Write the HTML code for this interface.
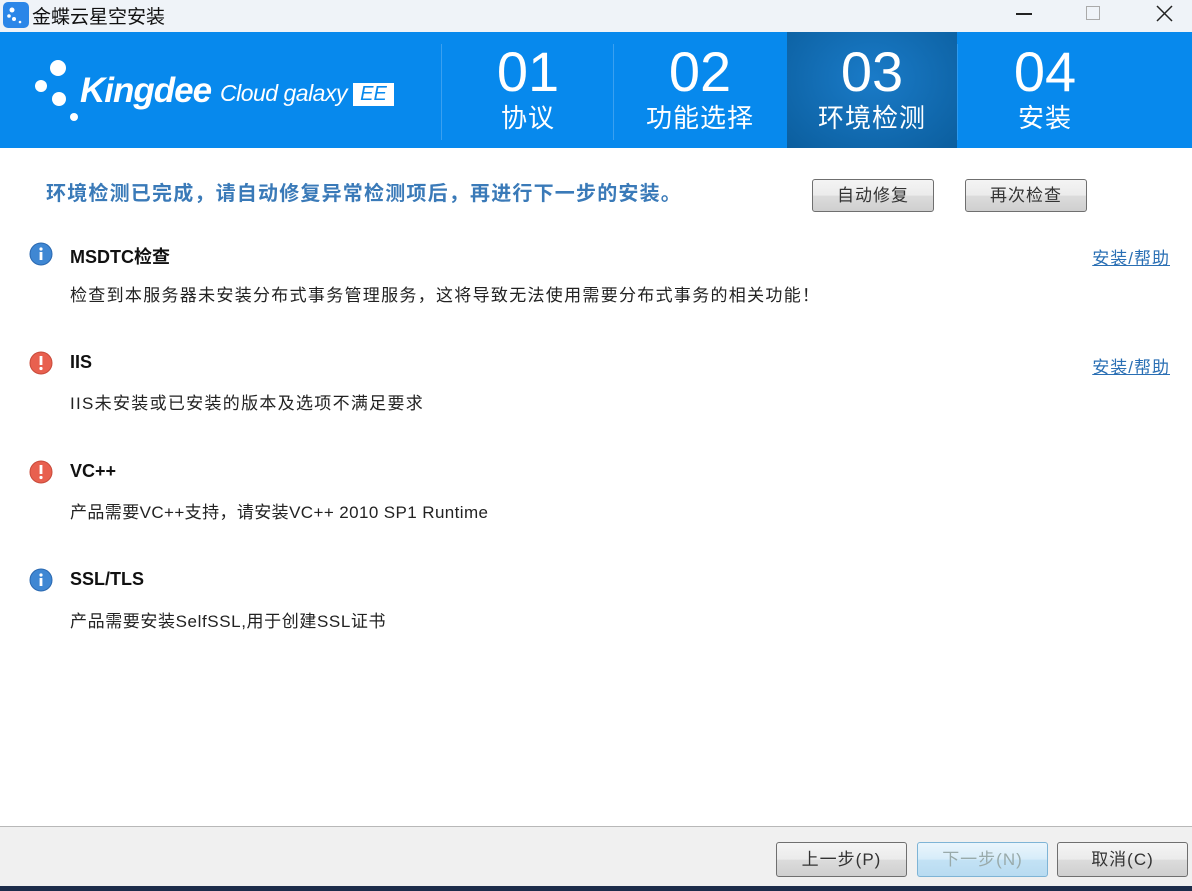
<!DOCTYPE html>
<html><head><meta charset="utf-8"><style>
*{margin:0;padding:0;box-sizing:border-box}
body{width:1192px;height:891px;background:#fff;font-family:"Liberation Sans","Noto Sans CJK SC",sans-serif;position:relative;overflow:hidden}
.tb{position:absolute;left:0;top:0;width:1192px;height:32px;background:#eff3f8}
.tb .t{position:absolute;left:32px;top:2px;font-size:19px;color:#111}
.hd{position:absolute;left:0;top:32px;width:1192px;height:116px;background:#0789ed}
.step{position:absolute;top:0;width:172px;height:116px;color:#fff;text-align:center}
.step .n{position:absolute;left:0;right:0;top:10px;font-size:56px;line-height:60px}
.step .l{position:absolute;left:0;right:0;top:66px;font-size:26px;letter-spacing:1px}
.sep{position:absolute;top:12px;width:1px;height:96px;background:#3aa0f0}
.btn{position:absolute;border:1px solid #6f6f6f;border-radius:3px;background:linear-gradient(#f4f4f4 0%,#ebebeb 50%,#dcdcdc 51%,#cfcfcf 100%);text-align:center;color:#333;font-size:17px;letter-spacing:1px}
.it{position:absolute;left:70px;font-size:18px;font-weight:bold;color:#111}
.ds{position:absolute;left:70px;font-size:17px;color:#222;letter-spacing:1.3px}
.lk{position:absolute;right:22px;font-size:17px;color:#2a6fb4;text-decoration:underline;letter-spacing:1px}
.ic{position:absolute;left:29px;width:24px;height:24px}
</style></head><body>
<div class="tb">
<svg style="position:absolute;left:3px;top:2px" width="26" height="26"><rect x="0" y="0" width="26" height="26" rx="5" fill="#2b86e8"/><circle cx="9" cy="8" r="2.5" fill="#fff"/><circle cx="6" cy="14" r="1.8" fill="#fff"/><circle cx="11" cy="17" r="2" fill="#fff"/><circle cx="17" cy="20" r="1.3" fill="#fff"/></svg>
<div class="t">金蝶云星空安装</div>
<div style="position:absolute;left:1016px;top:13px;width:16px;height:1.5px;background:#222"></div>
<div style="position:absolute;left:1086px;top:6px;width:14px;height:14px;border:1px solid #aaa"></div>
<svg style="position:absolute;left:1156px;top:5px" width="17" height="17"><path d="M1 1L16 16M16 1L1 16" stroke="#222" stroke-width="1.5"/></svg>
</div>
<div class="hd">
<svg style="position:absolute;left:34px;top:26px" width="50" height="70"><circle cx="24" cy="10" r="8" fill="#fff"/><circle cx="7" cy="28" r="6" fill="#fff"/><circle cx="25" cy="41" r="7" fill="#fff"/><circle cx="40" cy="59" r="4" fill="#fff"/></svg>
<div style="position:absolute;left:80px;top:39px;color:#fff;font-size:35px;font-weight:bold;font-style:italic;letter-spacing:-1px">Kingdee</div>
<div style="position:absolute;left:220px;top:48px;color:#fff;font-size:23px;font-style:italic;letter-spacing:-0.5px">Cloud galaxy</div>
<div style="position:absolute;left:353px;top:51px;width:41px;height:23px;background:#fff;color:#0789ed;font-size:20px;font-style:italic;text-align:center;line-height:23px">EE</div>
<div class="sep" style="left:441px"></div>
<div class="step" style="left:442px"><div class="n">01</div><div class="l">协议</div></div>
<div class="sep" style="left:613px"></div>
<div class="step" style="left:614px"><div class="n">02</div><div class="l">功能选择</div></div>
<div class="step" style="left:787px;width:170px;background:radial-gradient(ellipse at 50% 40%,#1a7bc8,#0b5e9e)"><div class="n">03</div><div class="l">环境检测</div></div>
<div class="sep" style="left:957px;background:#2c9af0"></div>
<div class="step" style="left:959px"><div class="n">04</div><div class="l">安装</div></div>
</div>
<div style="position:absolute;left:46px;top:177px;font-size:20px;font-weight:bold;color:#3a7ab8;letter-spacing:1.2px">环境检测已完成，请自动修复异常检测项后，再进行下一步的安装。</div>
<div class="btn" style="left:812px;top:179px;width:122px;height:33px;line-height:31px">自动修复</div>
<div class="btn" style="left:965px;top:179px;width:122px;height:33px;line-height:31px">再次检查</div>

<svg class="ic" style="top:242px" viewBox="0 0 24 24"><circle cx="12" cy="12" r="11" fill="#3f87d3" stroke="#2a68b0"/><circle cx="12" cy="7" r="1.6" fill="#fff"/><rect x="10.6" y="10" width="2.8" height="8" fill="#fff"/></svg>
<div class="it" style="top:243px">MSDTC检查</div>
<div class="lk" style="top:244px">安装/帮助</div>
<div class="ds" style="top:281px">检查到本服务器未安装分布式事务管理服务，这将导致无法使用需要分布式事务的相关功能！</div>

<svg class="ic" style="top:351px" viewBox="0 0 24 24"><circle cx="12" cy="12" r="11" fill="#e8604f" stroke="#c84a3a"/><rect x="10.6" y="5" width="2.8" height="9" fill="#fff"/><circle cx="12" cy="17.5" r="1.6" fill="#fff"/></svg>
<div class="it" style="top:352px">IIS</div>
<div class="lk" style="top:353px">安装/帮助</div>
<div class="ds" style="top:389px">IIS未安装或已安装的版本及选项不满足要求</div>

<svg class="ic" style="top:460px" viewBox="0 0 24 24"><circle cx="12" cy="12" r="11" fill="#e8604f" stroke="#c84a3a"/><rect x="10.6" y="5" width="2.8" height="9" fill="#fff"/><circle cx="12" cy="17.5" r="1.6" fill="#fff"/></svg>
<div class="it" style="top:461px">VC++</div>
<div class="ds" style="top:498px;letter-spacing:0.4px">产品需要VC++支持，请安装VC++ 2010 SP1 Runtime</div>

<svg class="ic" style="top:568px" viewBox="0 0 24 24"><circle cx="12" cy="12" r="11" fill="#3f87d3" stroke="#2a68b0"/><circle cx="12" cy="7" r="1.6" fill="#fff"/><rect x="10.6" y="10" width="2.8" height="8" fill="#fff"/></svg>
<div class="it" style="top:569px">SSL/TLS</div>
<div class="ds" style="top:607px;letter-spacing:0.6px">产品需要安装SelfSSL,用于创建SSL证书</div>

<div style="position:absolute;left:0;top:826px;width:1192px;height:65px;background:#f0f0f0;border-top:1px solid #b8b8b8"></div>
<div style="position:absolute;left:0;top:886px;width:1192px;height:5px;background:#1c2c4a"></div>
<div class="btn" style="left:776px;top:842px;width:131px;height:35px;line-height:33px">上一步(P)</div>
<div class="btn" style="left:917px;top:842px;width:131px;height:35px;line-height:33px;border-color:#7eb4d6;background:linear-gradient(#eaf5fc,#d6ecf9 50%,#c3e2f5 51%,#b8dbf1);color:#9aa">下一步(N)</div>
<div class="btn" style="left:1057px;top:842px;width:131px;height:35px;line-height:33px">取消(C)</div>
</body></html>
